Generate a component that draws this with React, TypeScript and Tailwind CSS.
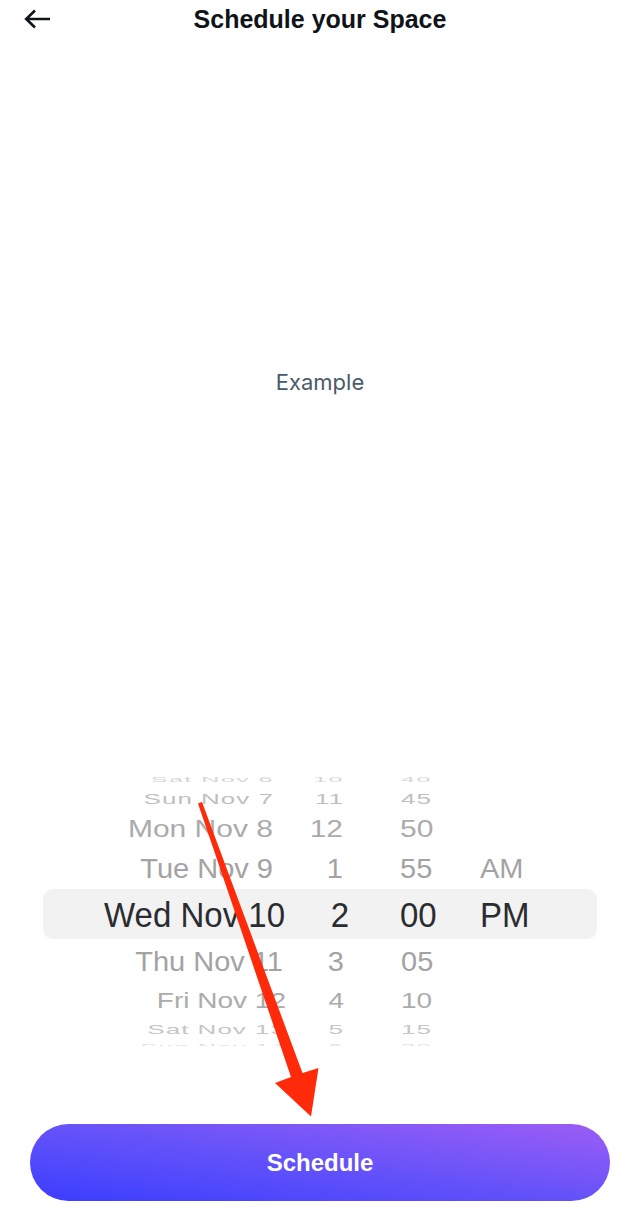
import React from "react";

type Row = {
  date: string;
  hour: string;
  min: string;
  ampm: string;
  h: string;
  text: string;
  color: string;
  scale: string;
  dateW: string;
  hourW: string;
};

const rowsAbove: Row[] = [
  { date: "Sat Nov 6", hour: "10", min: "40", ampm: "", h: "h-[18px] -mt-[6px]", text: "text-[25px] tracking-[1.5px]", color: "text-[#d6d6d6]", scale: "scale-y-[0.3]", dateW: "w-[274px]", hourW: "w-[70px]" },
  { date: "Sun Nov 7", hour: "11", min: "45", ampm: "", h: "h-[22px]", text: "text-[26px] tracking-[1px]", color: "text-[#bfbfbf]", scale: "scale-y-[0.55]", dateW: "w-[274px]", hourW: "w-[70px]" },
  { date: "Mon Nov 8", hour: "12", min: "50", ampm: "", h: "h-[37px]", text: "text-[30px]", color: "text-[#ababab]", scale: "scale-y-[0.8]", dateW: "w-[273px]", hourW: "w-[70px]" },
  { date: "Tue Nov 9", hour: "1", min: "55", ampm: "AM", h: "h-[42px]", text: "text-[29px]", color: "text-[#a3a3a3]", scale: "scale-y-[0.96]", dateW: "w-[273px]", hourW: "w-[70px]" },
];

const rowsBelow: Row[] = [
  { date: "Thu Nov 11", hour: "3", min: "05", ampm: "", h: "h-[44px]", text: "text-[29px]", color: "text-[#a3a3a3]", scale: "scale-y-[0.98]", dateW: "w-[283px]", hourW: "w-[61px]" },
  { date: "Fri Nov 12", hour: "4", min: "10", ampm: "", h: "h-[36px]", text: "text-[28px]", color: "text-[#acacac]", scale: "scale-y-[0.82]", dateW: "w-[286px]", hourW: "w-[58px]" },
  { date: "Sat Nov 13", hour: "5", min: "15", ampm: "", h: "h-[20px]", text: "text-[26px] tracking-[1px]", color: "text-[#c6c6c6]", scale: "scale-y-[0.5]", dateW: "w-[286px]", hourW: "w-[58px]" },
  { date: "Sun Nov 14", hour: "6", min: "20", ampm: "", h: "h-[14px]", text: "text-[25px] tracking-[1.5px]", color: "text-[#dedede]", scale: "scale-y-[0.3]", dateW: "w-[286px]", hourW: "w-[58px]" },
];

function PickerRow({ r }: { r: Row }) {
  return (
    <div className={`flex shrink-0 items-center ${r.h}`}>
      <div className={`flex w-full items-center leading-none ${r.text} ${r.color} ${r.scale}`}>
        <div className={`${r.dateW} shrink-0 whitespace-nowrap text-right`}>{r.date}</div>
        <div className={`${r.hourW} shrink-0 text-right`}>{r.hour}</div>
        <div className="ml-[57px] w-[80px] shrink-0 text-left">{r.min}</div>
        <div className="shrink-0 text-left">{r.ampm}</div>
      </div>
    </div>
  );
}

export default function App() {
  return (
    <div className="relative flex h-[1214px] w-[640px] flex-col overflow-hidden bg-white font-['Liberation_Sans',Arial,sans-serif]">
      {/* Header */}
      <div className="relative flex h-[38px] shrink-0 items-center justify-center">
        <svg className="absolute left-[24px] top-[9px]" width="27" height="20" viewBox="0 0 27 20" fill="none">
          <path d="M26 10H2.5M11 1.5L2.2 10L11 18.5" stroke="#0f1419" strokeWidth="2.6" strokeLinecap="butt" strokeLinejoin="miter" />
        </svg>
        <div className="text-[25px] font-bold leading-none text-[#0f1419]">Schedule your Space</div>
      </div>

      {/* Body */}
      <div className="flex h-[738px] shrink-0 justify-center pt-[330px]">
        <div className="font-['Inter',sans-serif] text-[22px] leading-[28px] text-[#4b5a69]">Example</div>
      </div>

      {/* Picker */}
      <div className="flex h-[270px] shrink-0 flex-col overflow-hidden">
        {rowsAbove.map((r) => (
          <PickerRow key={r.date} r={r} />
        ))}
        <div className="mx-[43px] flex h-[50px] shrink-0 items-center rounded-[10px] bg-[#f2f2f2]">
          <div className="flex w-full scale-y-[1.05] items-center text-[33px] leading-none text-[#2a2c30]">
            <div className="w-[242px] shrink-0 whitespace-nowrap text-right">Wed Nov 10</div>
            <div className="w-[64px] shrink-0 text-right">2</div>
            <div className="ml-[51px] w-[80px] shrink-0 text-left">00</div>
            <div className="shrink-0 text-left">PM</div>
          </div>
        </div>
        {rowsBelow.map((r) => (
          <PickerRow key={r.date} r={r} />
        ))}
      </div>

      {/* Button */}
      <div className="flex flex-1 flex-col px-[30px] pt-[78px]">
        <button className="flex h-[77px] w-full shrink-0 items-center justify-center rounded-full bg-linear-to-tr from-[#3a3cff] via-[#6552f9] to-[#9c5cf5] text-[24px] font-bold text-white">
          Schedule
        </button>
      </div>

      {/* Annotation arrow */}
      <svg className="pointer-events-none absolute left-0 top-0" width="640" height="1214" viewBox="0 0 640 1214">
        <polygon
          points="198,803.5 202,802 302.5,1073 318.5,1068 311,1116.5 275,1083 291,1077"
          fill="#fe2a0a"
          strokeLinejoin="round"
        />
      </svg>
    </div>
  );
}
